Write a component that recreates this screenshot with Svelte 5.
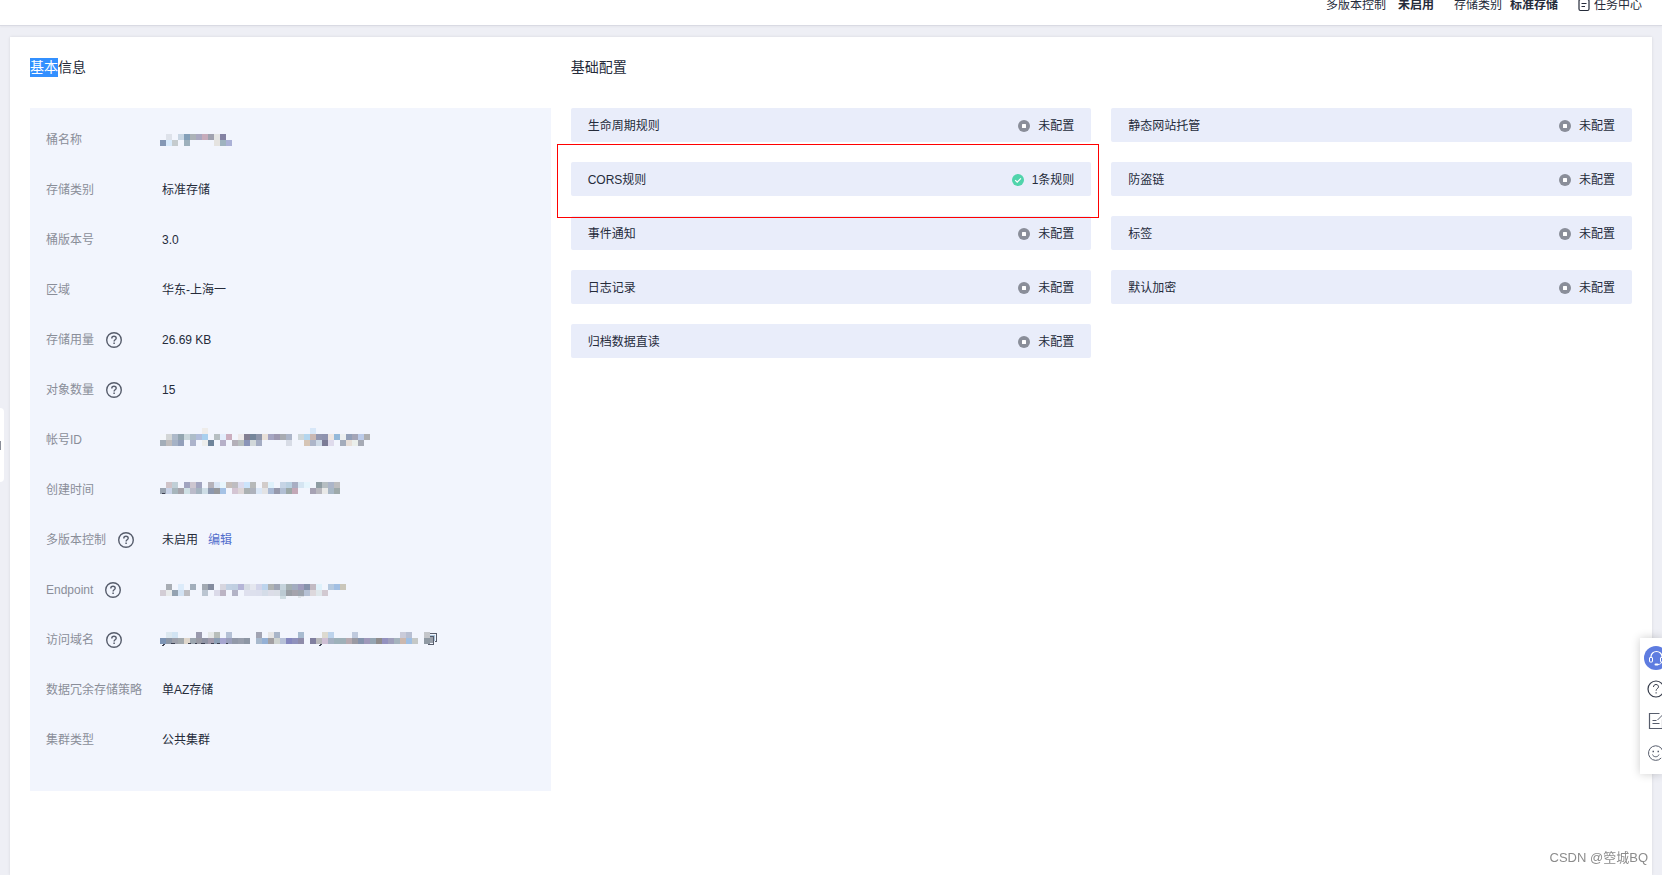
<script>
  const CELL = 6;

  // Redacted values: each line is [line number, "column:colour ..."]
  const masks = {
    name: [
      [0, '1:dee2ea 3:c9d6e3 4:849fb8 5:acb2b7 6:aaa8c0 7:c7acbb 8:a0a2b0 9:e4e5e4 10:8482a3'],
      [1, '0:8497b4 1:d8eafb 2:c5cbce 4:9db0bc 9:e5e3e0 10:9fb3bf 11:abb1d6']
    ],
    account: [
      [-1, '7:eeecea 25:d8e7f8'],
      [0, '0:f3f6fa 1:d3d6d6 2:adb9c9 3:93a5b0 4:cad7dc 5:aebdc9 6:b1bddb 7:a8cfee 9:b7bfc2 10:e3edfc 11:cbaebf 13:eeeaea 14:837f92 15:75869b 16:8e96ab 17:e8e0d9 18:a5a5c2 19:9d98b0 20:a8abb1 21:acb5c8 23:cfd7da 24:b4d6ee 25:cab8b3 26:9296b0 27:8f93af 28:eee6e2 29:94b9da 30:eceff0 31:929fb8 32:a4a5b7 33:bccbe9 34:aeafb1'],
      [1, '0:a3adb8 1:bfbcbc 2:a5b2c6 3:929fba 5:acb3cb 7:ededec 8:6f849b 10:b6b0c8 12:b4b0b9 13:b8bfbf 14:8a94b8 15:d2d8da 16:a4acc3 21:d8dce6 24:d6c5b6 25:adb5c9 26:cedae7 27:7b7b96 28:dfdbec 30:a4acbb 31:e8dfd8 32:ebefec 33:a6aab5']
    ],
    created: [
      [0, '1:cfc3c8 2:c0cfd7 4:a1a4bf 5:cdc6d0 6:a2a5c0 8:b5b2ba 9:d9e5f5 10:e8f6fd 11:c6beba 12:bebdc1 13:dcdbee 14:cce4fb 15:b7b9b9 17:d2ccca 18:dff1fb 20:c6d4e5 21:bad0e1 22:a8aec3 23:d5e5f2 24:e5f5fd 26:8f9da3 27:b6bec2 28:acb5c9 29:bdbdbf'],
      [1, '0:9ba5b2 1:c9d3e8 2:a7b5bc 3:a5a3aa 4:cfe0e5 5:bbbbca 6:a5b4c0 7:cedde6 8:8d98af 9:96989c 10:a5c2e5 12:d4c5d3 13:ddd6d7 14:abb1b2 15:aeb2bc 16:dae7f7 17:e3e3e5 18:aabad5 19:9699ac 20:b2bfd4 21:9ca8a7 22:c3a8b7 25:a6a2b3 26:b9b8be 27:e9e9e8 28:a8b7c6 29:9ea9aa']
    ],
    endpoint: [
      [0, '1:a8adb4 3:dcebfa 5:a2aebb 7:a2a9b2 8:848c9f 10:d7d6df 11:c2d1e3 12:c0cfe1 13:b5b5d7 14:d6dce4 15:e5e7ef 16:d3d5ea 17:bdd4ed 18:b0b3b3 19:9fa5b5 20:c5d3dc 21:a4afb2 22:a3acc0 23:a09dbd 24:8793ac 25:c2bac3 26:dff1fb 28:b6c9df 29:a2bfe3 30:cac6ba'],
      [1, '0:d3cdd5 1:e9ebeb 2:94a2b1 3:d2e2f3 4:bdbdc2 7:bbc5d1 9:dbdae9 10:bcb4c4 12:b3b3c6 14:dfe0ee 15:dde0ed 16:dcdfed 17:d4dce8 18:dcdde8 19:dadee6 20:bccad3 21:9a9ea5 22:a5a3ac 23:9da4ae 24:b6c1d5 25:ddd8dc 26:dfe7eb 27:d2c9d1']
    ],
    domain: [
      [0, '1:dde8f0 2:d2e4f3 6:9a9aae 8:e5e8e8 9:b8beba 11:b5c1d6 16:a2a4b3 18:e6e5e5 19:a9b5c8 23:a8bbd0 27:dddad0 28:bdd3ec 32:c0cade 40:cacbd9 41:b8bfd2 44:c4c6ca'],
      [1, '0:7e95b6 1:8e98a8 2:9ea1ac 3:a3a9ad 4:e0d7cc 5:9da6b0 6:9a9ba5 7:9094a5 8:a39cad 9:8d9fb5 10:a6a5d0 11:9ba0bd 12:9299a9 13:989eac 14:8d96a4 16:a8b9cd 17:94b0d5 18:a29fa2 19:ced3d0 20:b7c1d8 21:8587bf 22:8f91bc 23:8f8caa 25:807f9f 26:b9b9bb 27:cfc0d5 28:a5b1c3 29:9db1ba 30:9fb0b8 31:b7aab0 32:9a9aa3 33:8593ad 34:9f98ba 35:95a5b3 36:8f8c8c 37:9391bf 38:9f9fbb 39:a5b3bd 40:ccb8ae 41:9fbfe3 42:c5c8c7 44:8f99a3']
    ]
  };

  // Slivers of glyphs left visible at the edge of a mask: [x, y, width, height]
  const slivers = {
    created: [[2, 11, 3, 1]],
    domain: [[3, 12, 2, 1], [2, 13, 2, 1], [11, 11, 4, 1], [28, 11, 3, 1], [35, 11, 2, 1], [41, 11, 4, 1], [51, 11, 3, 1], [57, 11, 3, 1], [66, 11, 2, 1], [160, 12, 2, 1], [159, 13, 2, 1]]
  };

  const cells = (key) =>
    masks[key].flatMap(([line, text]) =>
      text.split(' ').map((part) => {
        const [col, color] = part.split(':');
        return { x: col * CELL, y: line * CELL, color: '#' + color };
      })
    );

  const info = [
    { label: '桶名称', mask: 'name' },
    { label: '存储类别', value: '标准存储' },
    { label: '桶版本号', value: '3.0' },
    { label: '区域', value: '华东-上海一' },
    { label: '存储用量', help: true, value: '26.69 KB' },
    { label: '对象数量', help: true, value: '15' },
    { label: '帐号ID', mask: 'account' },
    { label: '创建时间', mask: 'created', tall: true },
    { label: '多版本控制', help: true, value: '未启用', edit: true },
    { label: 'Endpoint', help: true, mask: 'endpoint' },
    { label: '访问域名', help: true, mask: 'domain', tall: true },
    { label: '数据冗余存储策略', value: '单AZ存储' },
    { label: '集群类型', value: '公共集群' }
  ];

  const settings = [
    { label: '生命周期规则' },
    { label: '静态网站托管' },
    { label: 'CORS规则', status: '1条规则', marked: true },
    { label: '防盗链' },
    { label: '事件通知' },
    { label: '标签' },
    { label: '日志记录' },
    { label: '默认加密' },
    { label: '归档数据直读' }
  ];
</script>

<div class="page">
  <header class="topbar">
    <div class="fact wide"><span>多版本控制</span><strong>未启用</strong></div>
    <div class="fact"><span>存储类别</span><strong>标准存储</strong></div>
    <a class="tasks" href="#tasks">
      <svg width="12" height="14" viewBox="0 0 12 14" fill="none" stroke="#252b3a" aria-hidden="true">
        <rect x="1" y="1.5" width="10" height="11" rx="1.5" stroke-width="1.2" />
        <path d="M3.500 5.500h5M3.500 8.500h3.500" />
      </svg>
      <span>任务中心</span>
    </a>
  </header>

  <main class="card">
    <section>
      <h2><mark>基本</mark>信息</h2>
      <dl class="info">
        {#each info as row}
          <div class="row">
            <dt>
              <span>{row.label}</span>
              {#if row.help}
                <button aria-label="帮助">
                  <svg width="16" height="16" viewBox="0 0 16 16" fill="none" stroke="#575d6c" aria-hidden="true">
                    <circle cx="8" cy="8" r="7.3" stroke-width="1.4" />
                    <path d="M5.800 6.400c0-1.300 1-2.100 2.200-2.100s2.200.8 2.200 2c0 1.400-2.100 1.600-2.100 3.100" stroke-width="1.4" />
                    <path d="M8.100 10.500v1.500" stroke-width="1.5" />
                  </svg>
                </button>
              {/if}
            </dt>
            <dd>
              {#if row.mask}
                <svg class="mask" width="270" height={row.tall ? 16 : 12} shape-rendering="crispEdges" aria-hidden="true">
                  {#each cells(row.mask) as c}
                    <rect x={c.x} y={c.y} width={CELL} height={CELL} fill={c.color} />
                  {/each}
                  {#each slivers[row.mask] ?? [] as s}
                    <rect x={s[0]} y={s[1]} width={s[2]} height={s[3]} fill="#3f4354" />
                  {/each}
                  {#if row.mask === 'endpoint'}
                    <path d="M120 12h6v3h-6z" fill="#cfdce2" />
                    <path d="M138 12h6v1l-6 1z" fill="#dfe3e8" />
                  {/if}
                  {#if row.mask === 'domain'}
                    <path d="M270 1.5h6.5v8h-2" fill="none" stroke="#575d6c" />
                    <path d="M270 4.5h3.5v7.5h-6" fill="none" stroke="#575d6c" />
                    <path d="M270 3h4M274.500 3v6" fill="none" stroke="#a9c4dc" />
                    <path d="M270 5h3v6h-3z" fill="#9aa0aa" />
                  {/if}
                </svg>
              {:else}
                <span>{row.value}</span>
              {/if}
              {#if row.edit}<a href="#edit">编辑</a>{/if}
            </dd>
          </div>
        {/each}
      </dl>
    </section>

    <section>
      <h2>基础配置</h2>
      <div class="settings">
        {#each settings as item}
          <button class="setting" class:marked={item.marked}>
            <span>{item.label}</span>
            <span class="status">
              {#if item.status}
                <svg width="12" height="12" viewBox="0 0 12 12" aria-hidden="true">
                  <circle cx="6" cy="6" r="6" fill="#50d4ab" />
                  <path d="M3.200 6.100l2 2 3.700-3.800" fill="none" stroke="#fff" stroke-width="1.2" />
                </svg>
              {:else}
                <svg width="12" height="12" viewBox="0 0 12 12" aria-hidden="true">
                  <circle cx="6" cy="6" r="6" fill="#8a8e99" />
                  <rect x="4" y="4" width="4" height="4" rx=".5" fill="#fff" />
                </svg>
              {/if}
              <span>{item.status ?? '未配置'}</span>
            </span>
          </button>
        {/each}
      </div>
    </section>
  </main>

  <button class="drawer" aria-label="展开"><i></i></button>

  <aside class="float">
    <button aria-label="客服">
      <svg width="24" height="24" viewBox="0 0 24 24" fill="none" stroke="#fff" aria-hidden="true">
        <circle cx="12" cy="12" r="12" fill="#5e7ce0" stroke="none" />
        <path d="M7 11.500v-1a5.500 5 0 0 1 11 0v1" stroke-width="1.2" />
        <rect x="5.5" y="11.5" width="3" height="4.5" rx=".5" />
        <rect x="16.5" y="11.5" width="3" height="4.5" rx=".5" />
        <path d="M17.500 16c0 1.500-1.500 2.500-3.500 2.500" />
        <rect x="10.5" y="17.5" width="4" height="2" rx="1" fill="#fff" stroke="none" />
      </svg>
    </button>
    <button aria-label="帮助">
      <svg width="18" height="18" viewBox="0 0 18 18" fill="none" stroke="#353b4a" aria-hidden="true">
        <circle cx="9" cy="9" r="8" stroke-width="1.2" />
        <path d="M6.500 7c0-1.600 1.100-2.500 2.500-2.500s2.500.9 2.500 2.300c0 1.700-2.400 1.900-2.400 3.900M9.100 12.200v1.300" />
      </svg>
    </button>
    <button aria-label="反馈">
      <svg width="18" height="18" viewBox="0 0 18 18" fill="none" stroke="#575d6c" aria-hidden="true">
        <path d="M12.500 1.500h-10v15h13v-9" stroke-width="1.2" />
        <path d="M16.500 2l-6 6M5.500 8.500h4M5.500 11.500h7" />
      </svg>
    </button>
    <button aria-label="评价">
      <svg width="18" height="18" viewBox="0 0 18 18" fill="none" stroke="#575d6c" aria-hidden="true">
        <path d="M15.800 7a7.300 7.300 0 1 0-1.600 7" />
        <path d="M5.500 10.500c.8 3 5.600 3 6.500 0" />
        <path d="M5.500 7.500h1.500M10.500 7.500h1.500" stroke-width="1.5" />
      </svg>
    </button>
  </aside>

  <div class="watermark">CSDN @箜城BQ</div>
</div>

<style>
  :global(body) {
    margin: 0;
    background: #eeeff5;
  }
  .page {
    display: flex;
    flex-direction: column;
    min-height: 100vh;
    font: 12px/20px "Liberation Sans", "Noto Sans CJK SC", sans-serif;
    color: #252b3a;
  }
  button {
    border: 0;
    padding: 0;
    background: none;
    font: inherit;
    color: inherit;
    text-align: left;
    cursor: pointer;
  }
  svg {
    display: block;
    flex: none;
  }
  a {
    color: #526ecc;
    text-decoration: none;
  }
  .topbar {
    display: flex;
    justify-content: flex-end;
    gap: 20px;
    margin-top: -5px;
    padding: 0 20px 10px;
    background: #fff;
    border-bottom: 1px solid #d9dae3;
    box-shadow: 0 1px 2px #0000000a;
  }
  .fact {
    display: flex;
    gap: 8px;
  }
  .fact.wide {
    gap: 12px;
  }
  .tasks {
    display: flex;
    align-items: center;
    gap: 4px;
    color: inherit;
  }
  .card {
    flex: 1;
    display: grid;
    grid-template-columns: calc((100% - 40px) / 3) minmax(0, 1fr);
    align-content: start;
    gap: 20px;
    margin: 11px 10px 0;
    padding: 20px;
    background: #fff;
    box-shadow: 0 0 3px #0000001a;
  }
  h2 {
    margin: 0 0 31px;
    font-size: 14px;
    line-height: 20px;
    font-weight: 400;
  }
  mark {
    display: inline-block;
    line-height: 19px;
    background: #3390ff;
    color: #fff;
  }
  .info {
    margin: 0;
    padding: 7px 16px 26px;
    background: #f2f5fd;
  }
  .row {
    display: flex;
    align-items: center;
    height: 50px;
  }
  dt {
    display: flex;
    align-items: center;
    gap: 12px;
    width: 116px;
    color: #8a8e99;
    white-space: nowrap;
  }
  dd {
    display: flex;
    align-items: center;
    gap: 10px;
    margin: 0;
  }
  .mask {
    overflow: visible;
    margin-left: -2px;
  }
  .settings {
    display: grid;
    grid-template-columns: 1fr 1fr;
    gap: 20px;
  }
  .setting {
    position: relative;
    display: flex;
    align-items: center;
    justify-content: space-between;
    height: 34px;
    padding: 2px 17px 0;
    border-radius: 2px;
    background: #e9edfa;
  }
  .status {
    display: flex;
    align-items: center;
    gap: 8px;
  }
  .marked::after {
    content: "";
    position: absolute;
    z-index: 1;
    inset: -18px -8px -22px -14px;
    border: 1px solid #f00;
  }
  .drawer {
    position: fixed;
    left: 0;
    top: 408px;
    display: flex;
    align-items: center;
    width: 4px;
    height: 74px;
    border-radius: 0 4px 4px 0;
    background: #fff;
  }
  .drawer i {
    width: 1px;
    height: 9px;
    background: #8a8e99;
  }
  .float {
    position: fixed;
    right: 0;
    bottom: 101px;
    z-index: 2;
    display: flex;
    flex-direction: column;
    gap: 14px;
    box-sizing: border-box;
    width: 22px;
    height: 136px;
    padding: 8px 0 0 4px;
    background: #fff;
    box-shadow: 0 0 10px #00000033;
  }
  .float button {
    display: flex;
    justify-content: center;
    width: 24px;
  }
  .float button:first-child {
    margin-bottom: -4px;
  }
  .watermark {
    position: fixed;
    right: 14px;
    bottom: 7px;
    font-size: 13px;
    color: #8c8c8c;
  }
</style>
